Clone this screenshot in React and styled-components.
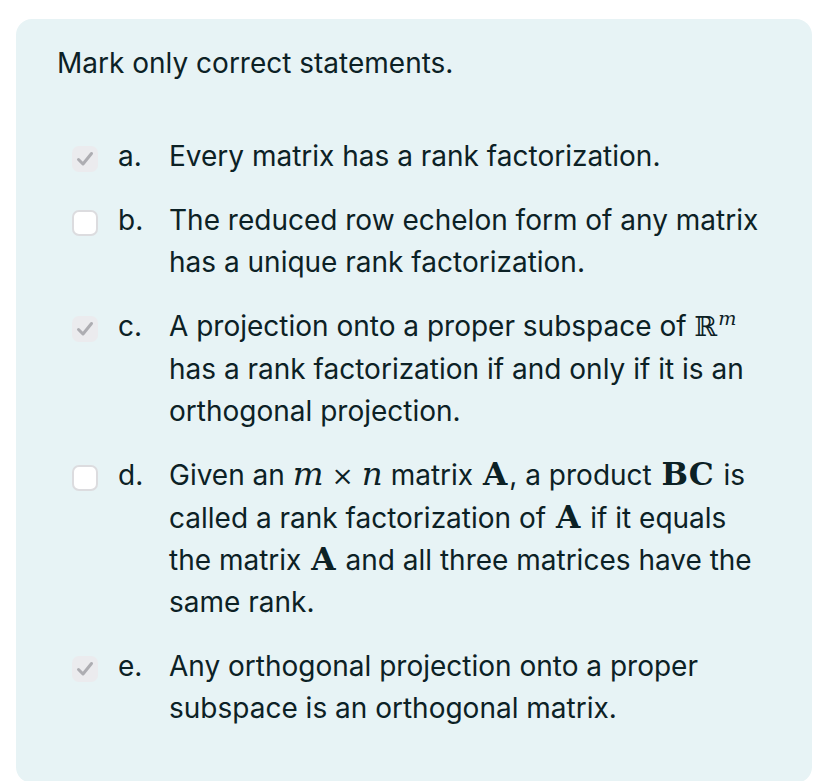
import React from 'react'
import styled, { createGlobalStyle } from 'styled-components'

const Global = createGlobalStyle`
  html, body {
    margin: 0;
    background: #ffffff;
  }
  body {
    font-family: 'Inter', 'Noto Sans', sans-serif;
    color: #0c2125;
  }
`

const Page = styled.div`
  padding: 19px 16px 0;
`

const Card = styled.div`
  background: #e7f3f5;
  border-radius: 16px;
  padding: 27px 40px 40px 41px;
  min-height: 764px;
  box-sizing: border-box;
`

const Prompt = styled.h1`
  margin: 0 0 55px;
  font-size: 28px;
  font-weight: 400;
  line-height: 34px;
`

const Options = styled.div`
  display: flex;
  flex-direction: column;
  gap: 22px;
  padding-left: 15px;
`

const Option = styled.label`
  display: grid;
  grid-template-columns: 26px 31px 1fr;
  column-gap: 20px;
  font-size: 28px;
  line-height: 42px;
`

const Box = styled.span`
  width: 26px;
  height: 26px;
  margin-top: 11px;
  box-sizing: border-box;
  border-radius: 7px;
  display: flex;
  align-items: center;
  justify-content: center;
  background: ${p => (p.$checked ? '#ebebee' : '#ffffff')};
  border: ${p => (p.$checked ? 'none' : '2px solid #dcdcdf')};
`

const Letter = styled.span``

const Text = styled.span``

const MathI = styled.span`
  font-family: 'DejaVu Serif', 'Liberation Serif', serif;
  font-style: italic;
  font-size: 1.16em;
  line-height: 0;
`

const MathB = styled.span`
  font-family: 'DejaVu Serif', 'Liberation Serif', serif;
  font-weight: 700;
  font-size: 1.12em;
  line-height: 0;
  padding: 0 2px;
`

const Op = styled.span`
  font-family: 'DejaVu Serif', serif;
  font-size: 0.95em;
  padding: 0 8px;
`

const Reals = styled.span`
  font-family: 'DejaVu Serif', 'DejaVu Sans', serif;
  font-size: 0.98em;
  & sup {
    font-style: italic;
    font-size: 0.7em;
    vertical-align: 0.55em;
    line-height: 0;
    margin-left: 1px;
  }
`

const Check = () => (
  <svg width="18" height="16" viewBox="0 0 18 16">
    <path d="M2.5 8.5 L7 13 L15.5 2.5" fill="none" stroke="#adadb2" strokeWidth="3" strokeLinecap="round" strokeLinejoin="round" />
  </svg>
)

const items = [
  { letter: 'a.', checked: true, text: <>Every matrix has a rank factorization.</> },
  { letter: 'b.', checked: false, text: <>The reduced row echelon form of any matrix has a unique rank factorization.</> },
  {
    letter: 'c.',
    checked: true,
    text: (
      <>
        A projection onto a proper subspace of <Reals>ℝ<sup>m</sup></Reals> has a rank factorization if and only if it is an orthogonal projection.
      </>
    ),
  },
  {
    letter: 'd.',
    checked: false,
    text: (
      <>
        Given an <MathI>m</MathI><Op>×</Op><MathI>n</MathI> matrix <MathB>A</MathB>, a product <MathB>BC</MathB> is called a rank factorization of <MathB>A</MathB> if it equals the matrix <MathB>A</MathB> and all three matrices have the same rank.
      </>
    ),
  },
  { letter: 'e.', checked: true, text: <>Any orthogonal projection onto a proper subspace is an orthogonal matrix.</> },
]

const App = () => {
  return (
    <>
      <Global />
      <Page>
        <Card>
          <Prompt>Mark only correct statements.</Prompt>
          <Options>
            {items.map((item, index) => (
              <Option key={index}>
                <Box $checked={item.checked}>{item.checked && <Check />}</Box>
                <Letter>{item.letter}</Letter>
                <Text>{item.text}</Text>
              </Option>
            ))}
          </Options>
        </Card>
      </Page>
    </>
  )
}

export default App
